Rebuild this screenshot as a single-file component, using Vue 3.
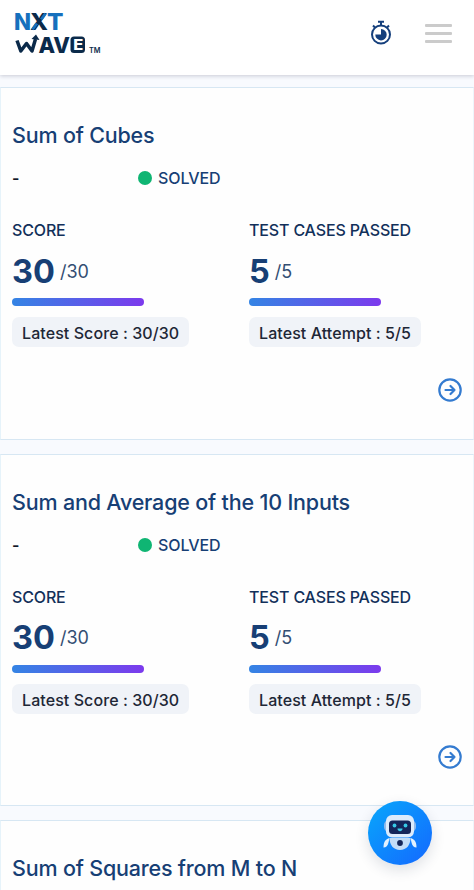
<template>
  <div class="page">
    <header class="navbar">
      <svg class="logo" width="90" height="46" viewBox="0 0 90 46" role="img" aria-label="NXT Wave">
        <g class="logo-text">
          <text x="0" y="20" font-size="23" textLength="17" lengthAdjust="spacingAndGlyphs" fill="#1670bd">N</text>
          <text x="16" y="20" font-size="23" textLength="18" lengthAdjust="spacingAndGlyphs" fill="#0b2a4a">X</text>
          <text x="33" y="20" font-size="23" textLength="16.500" lengthAdjust="spacingAndGlyphs" fill="#1670bd">T</text>
          <text x="24.500" y="43" font-size="22" textLength="31.500" lengthAdjust="spacingAndGlyphs" fill="#0b2a4a">AV</text>
        </g>
        <path d="M27.200 9.500l4.300-6M18.500 19.500l4.300-6" stroke="#1670bd" stroke-width="3" />
        <path d="M3 30.500l3.800 10.500 5.700-7.500 5.500 7.500 3.500-12" fill="none" stroke="#0b2a4a" stroke-width="3.500" stroke-linejoin="round" />
        <path d="M17.500 29l4.500-4.500 3.500 5.500z" fill="#0b2a4a" />
        <rect x="56.500" y="26.500" width="14.500" height="16.500" rx="3.500" fill="#0b2a4a" />
        <text class="logo-text" x="59.200" y="40" font-size="14.500" textLength="10" lengthAdjust="spacingAndGlyphs" fill="#fff">E</text>
        <text class="logo-tm" x="75" y="43" font-size="7" textLength="11.500" lengthAdjust="spacingAndGlyphs" fill="#0b2a4a">TM</text>
      </svg>

      <div class="nav-actions">
        <svg width="22" height="26" viewBox="0 0 22 26" fill="none" stroke="#153f7c">
          <circle cx="11" cy="14.500" r="9" stroke-width="2" />
          <path d="M8 1.800h6M11 2v4M3 5.500l2.500 2.500M19 5.500l-2.500 2.500" stroke-width="2" />
          <path d="M11 14.500V9a5.700 5.700 0 1 1-5.700 5.500z" fill="#153f7c" stroke="none" />
        </svg>
        <button class="menu" type="button" aria-label="Menu">
          <span v-for="n in 3" :key="n"></span>
        </button>
      </div>
    </header>

    <main class="list">
      <article v-for="item in questions" :key="item.title" class="card">
        <h2>{{ item.title }}</h2>

        <div class="status-row">
          <span class="dash">-</span>
          <span class="status"><i class="dot"></i>SOLVED</span>
        </div>

        <div class="stats">
          <section v-for="stat in stats" :key="stat.label" class="stat">
            <p class="label">{{ stat.label }}</p>
            <p class="value">
              <strong>{{ stat.value }}</strong><span>/{{ stat.total }}</span>
            </p>
            <div class="track">
              <div class="fill" :style="{ width: (stat.value / stat.total) * 100 + '%' }"></div>
            </div>
            <span class="latest">{{ stat.latest }} : {{ stat.value }}/{{ stat.total }}</span>
          </section>
        </div>

        <button class="open" type="button" aria-label="Open question">
          <svg width="24" height="24" viewBox="0 0 24 24" fill="none" stroke="#347bd0" stroke-width="2.200">
            <circle cx="12" cy="12" r="10.700" />
            <path d="M7.500 12h9M12.500 8l4 4-4 4" stroke-linejoin="round" stroke-linecap="round" />
          </svg>
        </button>
      </article>
    </main>

    <button class="assistant" type="button" aria-label="Assistant">
      <svg width="64" height="64" viewBox="0 0 64 64">
        <rect x="16" y="19" width="32" height="12" rx="5" fill="#8fb9ec" />
        <path d="M21.500 37c-4 1-6 4-6 9.500 2.500 0 4.500-2 5-5zM42.500 37c4 1 6 4 6 9.500-2.500 0-4.500-2-5-5z" fill="#e3f1fe" />
        <path d="M21.500 37h21c0 7-4 12-10.500 12s-10.500-5-10.500-12z" fill="#c3ddf8" />
        <rect x="18" y="14" width="28" height="22.500" rx="6" fill="#dcebfc" />
        <rect x="21" y="19.500" width="22" height="13.500" rx="3.500" fill="#14265a" />
        <circle cx="26.500" cy="24.500" r="1.900" fill="#38c9e6" />
        <circle cx="37.500" cy="24.500" r="1.900" fill="#38c9e6" />
        <path d="M29.500 27.500h5c0 3.500-5 3.500-5 0z" fill="#38c9e6" />
        <circle cx="32" cy="42" r="2.900" fill="#14265a" />
      </svg>
    </button>
  </div>
</template>

<script setup>
const questions = [
  { title: 'Sum of Cubes' },
  { title: 'Sum and Average of the 10 Inputs' },
  { title: 'Sum of Squares from M to N' }
]

const stats = [
  { label: 'SCORE', value: 30, total: 30, latest: 'Latest Score' },
  { label: 'TEST CASES PASSED', value: 5, total: 5, latest: 'Latest Attempt' }
]
</script>

<style>
body {
  margin: 0;
  overflow: hidden;
}
</style>

<style scoped>
.page {
  height: 890px;
  overflow: hidden;
  background: #f8fafe;
  color: #173f75;
  font-family: Inter, "Liberation Sans", sans-serif;
}

.navbar {
  position: relative;
  display: flex;
  justify-content: space-between;
  box-sizing: border-box;
  height: 75px;
  padding: 10px 22px 0 14px;
  background: #fff;
  box-shadow: 0 1px 4px rgba(30, 35, 70, 0.22);
}

.logo {
  overflow: visible;
}

.logo-text {
  font-family: Inter, sans-serif;
  font-weight: 800;
}

.logo-tm {
  font-family: Inter, sans-serif;
  font-weight: 600;
}

.nav-actions {
  display: flex;
  align-items: flex-start;
  gap: 33px;
  padding-top: 10px;
}

button {
  padding: 0;
  border: 0;
  background: none;
}

.menu {
  display: flex;
  flex-direction: column;
  gap: 5px;
  padding-top: 4px;
}

.menu span {
  width: 27px;
  height: 3px;
  border-radius: 1px;
  background: #cbcbcb;
}

.list {
  display: flex;
  flex-direction: column;
  gap: 14.2px;
  padding-top: 12px;
}

.card {
  display: flex;
  flex-direction: column;
  box-sizing: border-box;
  flex: 0 0 352.5px;
  padding: 32px 11px 0;
  border: 1px solid #d7e7f3;
  border-right-color: #edf5fb;
  border-left-color: #e6f3fa;
  background: #fefefe;
}

h2,
p {
  margin: 0;
}

h2 {
  font-size: 21.5px;
  font-weight: 450;
  letter-spacing: -0.19px;
  line-height: 30px;
}

.status-row {
  display: flex;
  margin-top: 16px;
  font-size: 16px;
  font-weight: 450;
  letter-spacing: -0.1px;
  line-height: 24px;
}

.dash {
  width: 126px;
  color: #111827;
  font-weight: 600;
}

.status {
  display: flex;
  align-items: center;
  gap: 6px;
}

.dot {
  width: 14px;
  height: 14px;
  border-radius: 50%;
  background: #0fb573;
}

.stats {
  display: grid;
  grid-template-columns: 237px 1fr;
  margin-top: 28px;
}

.label {
  color: #12305a;
  font-size: 16px;
  font-weight: 450;
  letter-spacing: -0.15px;
  line-height: 24px;
}

.value {
  display: flex;
  align-items: center;
  gap: 5px;
  height: 40px;
  margin-top: 9px;
}

.value strong {
  font-size: 32.5px;
  font-weight: 700;
}

.value span {
  color: #334e73;
  font-size: 18px;
}

.track {
  width: 132px;
  height: 8px;
  margin-top: 7px;
}

.fill {
  height: 100%;
  border-radius: 4px;
  background: linear-gradient(90deg, #3484e4, #7c3aed);
}

.latest {
  display: inline-block;
  margin-top: 11px;
  padding: 2px 10px 0;
  border-radius: 7px;
  background: #f0f3f8;
  color: #1e2736;
  font-size: 16px;
  font-weight: 450;
  letter-spacing: 0.08px;
  line-height: 28px;
}

.open {
  align-self: flex-end;
  height: 24px;
  margin-top: 31px;
}

.open svg,
.assistant svg {
  display: block;
}

.assistant {
  position: fixed;
  top: 801px;
  left: 368px;
  width: 64px;
  height: 64px;
  border-radius: 50%;
  background: linear-gradient(135deg, #08a7fb, #1468ff);
  box-shadow: 0 5px 14px rgba(30, 40, 70, 0.14);
}
</style>
